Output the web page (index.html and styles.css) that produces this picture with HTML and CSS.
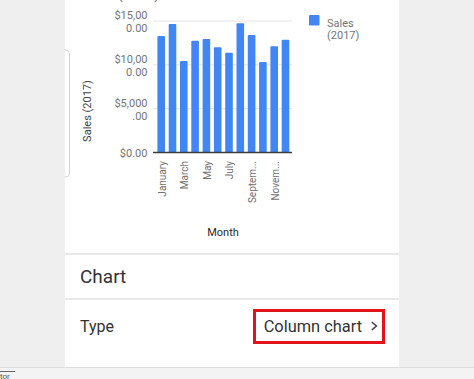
FILE: index.html
```html
<!DOCTYPE html>
<html>
<head>
<meta charset="utf-8">
<link rel="stylesheet" href="styles.css">
</head>
<body>
<div class="screen">
  <div class="main">
    <div class="gutter-left"></div>
    <div class="panel">
      <div class="chart-area">
        <svg class="chart" width="334" height="253" viewBox="65 0 334 253" xmlns="http://www.w3.org/2000/svg">
          <path class="bracket" d="M64 50 H66 Q69.5 50 69.5 54 V173 Q69.5 177 66 177 H64"/>
          <text class="title-clip" x="118" y="-0.6">(2017)</text>
          <g class="grid">
            <line x1="153" y1="21" x2="292" y2="21"/>
            <line x1="153" y1="64.8" x2="292" y2="64.8"/>
            <line x1="153" y1="108.7" x2="292" y2="108.7"/>
          </g>
          <g class="ylabels">
            <text x="147.5" y="19">$15,00</text>
            <text x="147.5" y="31.5">0.00</text>
            <text x="147.5" y="63">$10,00</text>
            <text x="147.5" y="75.5">0.00</text>
            <text x="147.5" y="107">$5,000</text>
            <text x="147.5" y="119.5">.00</text>
            <text x="147.5" y="157">$0.00</text>
          </g>
          <g class="bars">
            <path d="M157.4 152.5 V37 Q157.4 36 158.4 36 H164 Q165 36 165 37 V152.5 Z"/>
            <path d="M168.7 152.5 V25 Q168.7 24 169.7 24 H175.3 Q176.3 24 176.3 25 V152.5 Z"/>
            <path d="M180 152.5 V62 Q180 61 181 61 H186.6 Q187.6 61 187.6 62 V152.5 Z"/>
            <path d="M191.3 152.5 V41.7 Q191.3 40.7 192.3 40.7 H197.9 Q198.9 40.7 198.9 41.7 V152.5 Z"/>
            <path d="M202.6 152.5 V40 Q202.6 39 203.6 39 H209.2 Q210.2 39 210.2 40 V152.5 Z"/>
            <path d="M213.9 152.5 V48.3 Q213.9 47.3 214.9 47.3 H220.5 Q221.5 47.3 221.5 48.3 V152.5 Z"/>
            <path d="M225.2 152.5 V53.7 Q225.2 52.7 226.2 52.7 H231.8 Q232.8 52.7 232.8 53.7 V152.5 Z"/>
            <path d="M236.5 152.5 V24.3 Q236.5 23.3 237.5 23.3 H243.1 Q244.1 23.3 244.1 24.3 V152.5 Z"/>
            <path d="M247.8 152.5 V36 Q247.8 35 248.8 35 H254.4 Q255.4 35 255.4 36 V152.5 Z"/>
            <path d="M259.1 152.5 V63 Q259.1 62 260.1 62 H265.7 Q266.7 62 266.7 63 V152.5 Z"/>
            <path d="M270.4 152.5 V47.3 Q270.4 46.3 271.4 46.3 H277 Q278 46.3 278 47.3 V152.5 Z"/>
            <path d="M281.7 152.5 V40.7 Q281.7 39.7 282.7 39.7 H288.3 Q289.3 39.7 289.3 40.7 V152.5 Z"/>
          </g>
          <line class="baseline" x1="153" y1="152.5" x2="292" y2="152.5"/>
          <g class="xlabels">
            <text transform="translate(165.6 161) rotate(-90)">January</text>
            <text transform="translate(188.2 161) rotate(-90)">March</text>
            <text transform="translate(210.8 161) rotate(-90)">May</text>
            <text transform="translate(233.4 161) rotate(-90)">July</text>
            <text transform="translate(256 161) rotate(-90)">Septem...</text>
            <text transform="translate(278.6 161) rotate(-90)">Novem...</text>
          </g>
          <text class="axis-title" x="223" y="235.5">Month</text>
          <text class="axis-title vertical" transform="translate(91 111) rotate(-90)">Sales (2017)</text>
          <rect class="legend-swatch" x="309" y="15" width="10.5" height="10.5" rx="1"/>
          <text class="legend-text" x="327" y="26.5">Sales</text>
          <text class="legend-text" x="327" y="39">(2017)</text>
        </svg>
      </div>
      <div class="row row-chart">
        <span class="row-title">Chart</span>
      </div>
      <div class="row row-type">
        <span class="row-label">Type</span>
        <span class="type-value">
          <span class="type-text">Column chart</span>
          <svg class="chevron" width="8" height="10" viewBox="0 0 8 10" xmlns="http://www.w3.org/2000/svg">
            <polyline points="1.8,1 6.4,5 1.8,9"/>
          </svg>
        </span>
      </div>
    </div>
    <div class="gutter-right"></div>
  </div>
  <div class="bottom-strip">
    <div class="strip-tab">
      <span class="tab-line"></span>
      <span class="tab-text">tor</span>
    </div>
  </div>
</div>
</body>
</html>
```

FILE: styles.css
```css
html, body {
  margin: 0;
  padding: 0;
}

body {
  width: 474px;
  height: 379px;
  overflow: hidden;
  background: #efefef;
  font-family: Roboto, "Liberation Sans", Arial, sans-serif;
}

.screen {
  display: flex;
  flex-direction: column;
  width: 474px;
  height: 379px;
}

.main {
  display: flex;
  height: 367px;
  flex: none;
}

.gutter-left {
  width: 65px;
  flex: none;
  background: #efefef;
}

.panel {
  width: 334px;
  flex: none;
  background: #ffffff;
  display: flex;
  flex-direction: column;
}

.gutter-right {
  flex: 1;
  background: #efefef;
}

.chart-area {
  height: 253px;
  flex: none;
  overflow: hidden;
}

.chart {
  display: block;
  overflow: visible;
}

.bracket {
  fill: none;
  stroke: #d2d2d2;
  stroke-width: 1;
}

.title-clip {
  font-size: 14px;
  fill: #757575;
}

.grid line {
  stroke: #e4e4e4;
  stroke-width: 1;
}

.baseline {
  stroke: #3d3d3d;
  stroke-width: 1.3;
}

.ylabels text {
  font-size: 11px;
  fill: #757575;
  text-anchor: end;
}

.bars path {
  fill: #4285f4;
}

.xlabels text {
  font-size: 10px;
  fill: #707070;
  text-anchor: end;
}

.axis-title {
  font-size: 11px;
  fill: #2b2b2b;
  text-anchor: middle;
}

.axis-title.vertical {
  fill: #444444;
}

.legend-swatch {
  fill: #4285f4;
}

.legend-text {
  font-size: 11px;
  fill: #757575;
}

.row {
  display: flex;
  align-items: center;
  padding-left: 15px;
  border-top: 2px solid #e8e8e8;
  flex: none;
}

.row-chart {
  height: 43px;
}

.row-title {
  font-size: 19px;
  color: #333333;
}

.row-type {
  height: 52px;
  padding-bottom: 13px;
  padding-right: 14px;
  justify-content: space-between;
}

.row-label {
  font-size: 16px;
  color: #333333;
}

.type-value {
  display: flex;
  align-items: center;
  gap: 8px;
  border: 3px solid #e3131b;
  padding: 5px 4px 5px 8px;
  line-height: 19px;
}

.type-text {
  font-size: 16.4px;
  color: #333333;
}

.chevron {
  display: block;
}

.chevron polyline {
  fill: none;
  stroke: #444444;
  stroke-width: 1.6;
}

.bottom-strip {
  flex: 1;
  background: #f3f3f3;
  border-top: 1px solid #dddddd;
  overflow: hidden;
}

.strip-tab {
  display: flex;
  flex-direction: column;
  width: 15px;
  padding-top: 3px;
}

.tab-line {
  display: block;
  height: 1px;
  background: #666666;
}

.tab-text {
  font-size: 8px;
  line-height: 8px;
  color: #555555;
  margin-top: 1px;
}
```
